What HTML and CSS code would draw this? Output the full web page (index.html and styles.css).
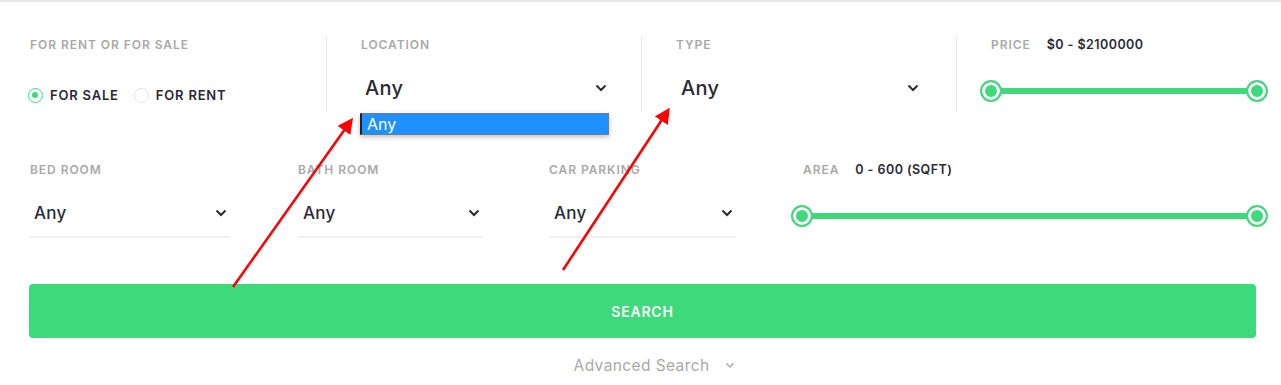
FILE: index.html
```html
<!DOCTYPE html>
<html>
<head>
<meta charset="utf-8">
<link rel="stylesheet" href="styles.css">
</head>
<body>
<div class="page">
  <div class="row1">
    <div class="col col-first">
      <div class="label">FOR RENT OR FOR SALE</div>
      <div class="radios">
        <span class="radio on"></span><span class="rtext">FOR SALE</span>
        <span class="radio"></span><span class="rtext">FOR RENT</span>
      </div>
    </div>
    <div class="col col-loc">
      <div class="label">LOCATION</div>
      <div class="bigsel"><span>Any</span><svg class="chev" width="12" height="8" viewBox="0 0 12 8"><polyline points="1.5,1.5 6,6 10.5,1.5" fill="none" stroke="#2a2a35" stroke-width="2"/></svg></div>
      <div class="dropdown"><span>Any</span></div>
    </div>
    <div class="col col-type">
      <div class="label">TYPE</div>
      <div class="bigsel"><span>Any</span><svg class="chev" width="12" height="8" viewBox="0 0 12 8"><polyline points="1.5,1.5 6,6 10.5,1.5" fill="none" stroke="#2a2a35" stroke-width="2"/></svg></div>
    </div>
    <div class="col col-price">
      <div class="label">PRICE <b class="val">$0 - $2100000</b></div>
      <div class="slider s1"><div class="track"></div><span class="knob left"></span><span class="knob right"></span></div>
    </div>
  </div>
  <div class="row2">
    <div class="f f-bed">
      <div class="label">BED ROOM</div>
      <div class="smsel"><span>Any</span><svg class="chev" width="12" height="8" viewBox="0 0 12 8"><polyline points="1.5,1.5 6,6 10.5,1.5" fill="none" stroke="#2a2a35" stroke-width="2"/></svg></div>
    </div>
    <div class="f f-bath">
      <div class="label">BATH ROOM</div>
      <div class="smsel"><span>Any</span><svg class="chev" width="12" height="8" viewBox="0 0 12 8"><polyline points="1.5,1.5 6,6 10.5,1.5" fill="none" stroke="#2a2a35" stroke-width="2"/></svg></div>
    </div>
    <div class="f f-car">
      <div class="label">CAR PARKING</div>
      <div class="smsel"><span>Any</span><svg class="chev" width="12" height="8" viewBox="0 0 12 8"><polyline points="1.5,1.5 6,6 10.5,1.5" fill="none" stroke="#2a2a35" stroke-width="2"/></svg></div>
    </div>
    <div class="f f-area">
      <div class="label">AREA <b class="val">0 - 600 (SQFT)</b></div>
      <div class="slider s2"><div class="track"></div><span class="knob left"></span><span class="knob right"></span></div>
    </div>
  </div>
  <button class="search">SEARCH</button>
  <div class="adv">Advanced Search <svg width="10" height="7" viewBox="0 0 10 7"><polyline points="1.5,1.5 5,5 8.5,1.5" fill="none" stroke="#aaa" stroke-width="1.5"/></svg></div>
  <svg class="arrows" width="1281" height="385" viewBox="0 0 1281 385">
    <defs>
      <marker id="ah" markerWidth="6" markerHeight="6" refX="4" refY="3" orient="auto" markerUnits="strokeWidth">
        <path d="M0,0 L6,3 L0,6 Z" fill="#f00"/>
      </marker>
    </defs>
    <line x1="233" y1="287" x2="350" y2="122" stroke="#f00" stroke-width="2.6" marker-end="url(#ah)"/>
    <line x1="563" y1="270" x2="667" y2="112" stroke="#f00" stroke-width="2.6" marker-end="url(#ah)"/>
  </svg>
</div>
</body>
</html>
```

FILE: styles.css
```css
* { box-sizing: border-box; }
html, body { margin: 0; padding: 0; background: #fff; }
body { font-family: "Inter", "DejaVu Sans", sans-serif; color: #2a2a35; width: 1281px; height: 385px; overflow: hidden; }
.page { position: relative; width: 1281px; height: 385px; border-top: 2px solid #e6e6e6; }

.label { font-size: 12px; font-weight: 600; color: #a9a9a9; letter-spacing: 0.95px; line-height: 14px; white-space: nowrap; }
.label .val { color: #2a2a35; font-weight: 600; margin-left: 12px; letter-spacing: 0.45px; font-size: 12.5px; }

.row1 { display: flex; padding-top: 33px; height: 112px; }
.col { position: relative; height: 77px; padding-top: 3px; }
.col-first { width: 327px; padding-left: 30px; border-right: 1px solid #ececec; }
.col-loc { width: 315px; padding-left: 34px; border-right: 1px solid #ececec; }
.col-type { width: 315px; padding-left: 34px; border-right: 1px solid #ececec; }
.col-price { width: 324px; padding-left: 34px; }

.radios { display: flex; align-items: center; margin-top: 35px; margin-left: -2px; }
.radio { width: 15px; height: 15px; border-radius: 50%; border: 1.5px solid #e2e2e2; display: inline-block; position: relative; }
.radio.on { border-color: #3dd97b; }
.radio.on::after { content: ""; position: absolute; left: 3px; top: 3px; width: 6px; height: 6px; border-radius: 50%; background: #3dd97b; }
.rtext { font-size: 13px; font-weight: 600; color: #2a2a35; margin-left: 7px; margin-right: 15px; letter-spacing: 0.8px; }

.bigsel { display: flex; align-items: center; justify-content: space-between; margin-top: 23px; padding-left: 4px; width: 248px; font-size: 20px; font-weight: 500; line-height: 26px; letter-spacing: 0.3px; }
.col-type .bigsel { padding-left: 5px; width: 245px; }
.bigsel .chev { margin-right: 2px; }
.dropdown { position: absolute; left: 33px; top: 78px; width: 249px; height: 22px; background: #1e90ff; border: 1px solid #7a7a7a; border-left: 2px solid #222; box-shadow: 0 2px 5px rgba(0,0,0,0.25); color: #fff; font-size: 16px; line-height: 20px; padding-left: 5px; font-weight: 400; }

.slider { position: relative; height: 22px; margin-top: 28px; width: 268px; }
.track { position: absolute; left: 4px; right: 4px; top: 8px; height: 6px; background: #3dd97b; border-radius: 2px; }
.knob { position: absolute; top: 0; width: 22px; height: 22px; border-radius: 50%; background: #3dd97b; border: 2px solid #46d681; box-shadow: inset 0 0 0 3px #fff; }
.knob.left { left: -11px; }
.knob.right { right: -11px; }
.s1 { margin-left: 0; width: 266px; }

.row2 { display: flex; padding-top: 49px; height: 125px; }
.f { flex: none; }
.f-bed { width: 298px; padding-left: 29px; }
.f-bath { width: 251px; }
.f-car { width: 253px; }
.f-area { width: 479px; }
.f .label { padding-left: 1px; }
.f-bath .label, .f-car .label { padding-left: 0; }
.smsel { display: flex; align-items: center; justify-content: space-between; margin-top: 17px; height: 44px; border-bottom: 2px solid #f0f0f0; padding: 0 3px 5px 5px; font-size: 17px; font-weight: 500; letter-spacing: 0.2px; }
.f-bed .smsel { width: 201px; }
.f-bath .smsel { width: 185px; }
.f-car .smsel { width: 187px; }
.f-area .slider { margin-top: 28px; width: 455px; margin-left: 0; }

.search { display: block; margin: 45px 0 0 29px; width: 1227px; height: 54px; border: none; border-radius: 4px; background: #3dd97b; color: #fff; font-family: inherit; font-size: 14px; font-weight: 600; letter-spacing: 0.8px; }
.adv { display: flex; align-items: center; justify-content: center; gap: 10px; margin: 18px 0 0 28px; font-size: 15.5px; color: #a9a9a9; letter-spacing: 0.4px; }
.adv svg { margin-left: 6px; }

.arrows { position: absolute; left: 0; top: -2px; pointer-events: none; }
```
